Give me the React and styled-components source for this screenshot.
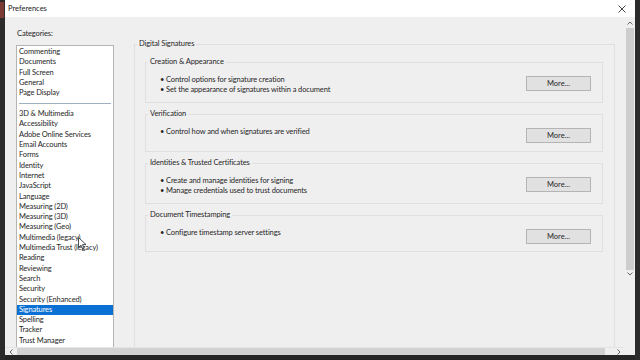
import React from 'react';
import styled, { createGlobalStyle } from 'styled-components';

const categoriesTop = ['Commenting', 'Documents', 'Full Screen', 'General', 'Page Display'];

const categories = [
    '3D & Multimedia', 'Accessibility', 'Adobe Online Services', 'Email Accounts', 'Forms',
    'Identity', 'Internet', 'JavaScript', 'Language', 'Measuring (2D)', 'Measuring (3D)',
    'Measuring (Geo)', 'Multimedia (legacy)', 'Multimedia Trust (legacy)', 'Reading',
    'Reviewing', 'Search', 'Security', 'Security (Enhanced)', 'Signatures', 'Spelling',
    'Tracker', 'Trust Manager',
];

const groups = [
    { title: 'Creation & Appearance', lines: ['Control options for signature creation', 'Set the appearance of signatures within a document'], pad: 8 },
    { title: 'Verification', lines: ['Control how and when signatures are verified'], pad: 8 },
    { title: 'Identities & Trusted Certificates', lines: ['Create and manage identities for signing', 'Manage credentials used to trust documents'], pad: 8 },
    { title: 'Document Timestamping', lines: ['Configure timestamp server settings'], pad: 7 },
];

function App() {
    return (
        <Screen>
            <GlobalStyle />
            <Edge>
                <RedSpot />
            </Edge>
            <Window>
                <TitleBar>
                    <Title>Preferences</Title>
                    <Close>
                        <svg width="8" height="8" viewBox="0 0 8 8">
                            <path d="M0.5 0.5 L7.5 7.5 M7.5 0.5 L0.5 7.5" stroke="#333" strokeWidth="0.9" />
                        </svg>
                    </Close>
                </TitleBar>
                <Body>
                    <Content>
                        <Sidebar>
                            <Label>Categories:</Label>
                            <List>
                                {categoriesTop.map(c => <Item key={c}>{c}</Item>)}
                                <Separator />
                                {categories.map(c => (
                                    <Item key={c} selected={c === 'Signatures'}>{c}</Item>
                                ))}
                            </List>
                        </Sidebar>
                        <Panel>
                            <Legend>Digital Signatures</Legend>
                            {groups.map(g => (
                                <Group key={g.title} pad={g.pad}>
                                    <GroupLegend>{g.title}</GroupLegend>
                                    <Bullets>
                                        {g.lines.map(l => <Bullet key={l}>• {l}</Bullet>)}
                                    </Bullets>
                                    <MoreButton>More...</MoreButton>
                                </Group>
                            ))}
                        </Panel>
                        <Cursor>
                            <svg width="9" height="13" viewBox="0 0 9 13">
                                <path d="M0.5 0.5 L0.5 10.5 L3 8.2 L4.8 12 L6.2 11.3 L4.5 7.6 L8 7.6 Z" fill="#fff" stroke="#222" strokeWidth="0.8" />
                            </svg>
                        </Cursor>
                    </Content>
                    <VScroll>
                        <Arrow>
                            <svg width="6" height="4" viewBox="0 0 6 4"><path d="M0.5 3.5 L3 1 L5.5 3.5" fill="none" stroke="#555" strokeWidth="0.9" /></svg>
                        </Arrow>
                        <VThumb />
                        <Arrow>
                            <svg width="6" height="4" viewBox="0 0 6 4"><path d="M0.5 0.5 L3 3 L5.5 0.5" fill="none" stroke="#555" strokeWidth="0.9" /></svg>
                        </Arrow>
                    </VScroll>
                    <HScroll>
                        <Arrow>
                            <svg width="4" height="6" viewBox="0 0 4 6"><path d="M3.5 0.5 L1 3 L3.5 5.5" fill="none" stroke="#555" strokeWidth="0.9" /></svg>
                        </Arrow>
                        <HThumb />
                        <Arrow>
                            <svg width="4" height="6" viewBox="0 0 4 6"><path d="M0.5 0.5 L3 3 L0.5 5.5" fill="none" stroke="#555" strokeWidth="0.9" /></svg>
                        </Arrow>
                    </HScroll>
                    <Corner />
                </Body>
            </Window>
            <Edge />
        </Screen>
    );
}

export default App;

const GlobalStyle = createGlobalStyle`
    body {
        margin: 0;
        background: #262626;
        font-family: Lato, "Noto Sans", sans-serif;
    }
`;

const Screen = styled.div`
    display: flex;
    width: 640px;
    height: 360px;
    overflow: hidden;
    background: #262626;
`;

const Edge = styled.div`
    width: 5px;
    flex-shrink: 0;
    background: #2c2b2b;
`;

const RedSpot = styled.div`
    width: 4px;
    height: 16px;
    margin-top: 2px;
    background: #7a3b34;
`;

const Window = styled.div`
    display: flex;
    flex-direction: column;
    width: 630px;
    height: 355px;
    background: #f0eff0;
`;

const TitleBar = styled.div`
    display: flex;
    align-items: center;
    justify-content: space-between;
    height: 17px;
    padding: 0 6px 0 3px;
    background: #fff;
`;

const Title = styled.span`
    font-size: 7.5px;
    color: #222;
`;

const Close = styled.span`
    display: flex;
    margin-right: 3px;
`;

const Body = styled.div`
    flex: 1;
    display: grid;
    grid-template-columns: 1fr 10px;
    grid-template-rows: 1fr 8px;
    min-height: 0;
`;

const Content = styled.div`
    position: relative;
    display: flex;
    gap: 20px;
    padding: 0 0 0 11px;
    overflow: hidden;
    font-size: 7.5px;
    letter-spacing: -0.12px;
    color: #262626;
`;

const Sidebar = styled.div`
    display: flex;
    flex-direction: column;
    width: 98px;
    flex-shrink: 0;
    padding-top: 12px;
`;

const Label = styled.div`
    height: 10px;
    line-height: 10px;
    padding-left: 1px;
    margin-bottom: 6px;
`;

const List = styled.div`
    flex: 1;
    display: flex;
    flex-direction: column;
    background: #fff;
    border: 1px solid #b4b4b4;
    padding: 1px 0;
`;

const Item = styled.div`
    height: 10.3px;
    line-height: 10.3px;
    padding-left: 2px;
    white-space: nowrap;
    background: ${p => (p.selected ? '#0a70d4' : 'transparent')};
    color: ${p => (p.selected ? '#fff' : '#262626')};
`;

const Separator = styled.div`
    height: 10.7px;
    display: flex;
    align-items: center;
    padding: 0 2px;

    &::after {
        content: '';
        flex: 1;
        height: 1px;
        background: #9fb0c2;
    }
`;

const Panel = styled.fieldset`
    flex: 1;
    margin: 22px 10px -20px 0;
    padding: 0 11px 0 10px;
    border: 1px solid #e0dedf;
    min-width: 0;
`;

const Legend = styled.legend`
    padding: 0 2px;
    margin-left: -8px;
    line-height: 10px;
    font-size: 7.5px;
`;

const Group = styled.fieldset`
    display: flex;
    align-items: flex-start;
    justify-content: space-between;
    margin: 8px 0 0 0;
    padding: 0 11px ${p => p.pad}px 14px;
    border: 1px solid #e0dedf;
    min-width: 0;

    & + & {
        margin-top: 6px;
    }
`;

const GroupLegend = styled.legend`
    padding: 0 2px;
    margin-left: -12px;
    line-height: 10px;
    font-size: 7.5px;
`;

const Bullets = styled.div`
    display: flex;
    flex-direction: column;
    padding-top: 8px;
`;

const Bullet = styled.div`
    line-height: 9.5px;
    white-space: nowrap;
`;

const MoreButton = styled.button`
    width: 65px;
    height: 15px;
    margin-top: 9px;
    padding: 0;
    font-family: inherit;
    font-size: 7.5px;
    color: #262626;
    background: #e1e1e1;
    border: 1px solid #b4b4b4;
`;

const Cursor = styled.div`
    position: absolute;
    left: 73px;
    top: 220px;
    display: flex;
`;

const VScroll = styled.div`
    display: flex;
    flex-direction: column;
    align-items: center;
    background: #f0eff0;
    padding: 2px 0 2px;
`;

const Arrow = styled.div`
    display: flex;
    align-items: center;
    justify-content: center;
    width: 8px;
    height: 8px;
    flex-shrink: 0;
`;

const VThumb = styled.div`
    width: 8px;
    height: 242px;
    margin-top: 1px;
    background: #cdcdcd;
`;

const HScroll = styled.div`
    display: flex;
    align-items: center;
    padding: 0 2px;
    background: #f0eff0;
    border-top: 1px solid #e4e4e4;
`;

const HThumb = styled.div`
    width: 588px;
    height: 7px;
    margin-left: 2px;
    margin-right: auto;
    background: #d2d2d2;
`;

const Corner = styled.div`
    background: #f0eff0;
`;
